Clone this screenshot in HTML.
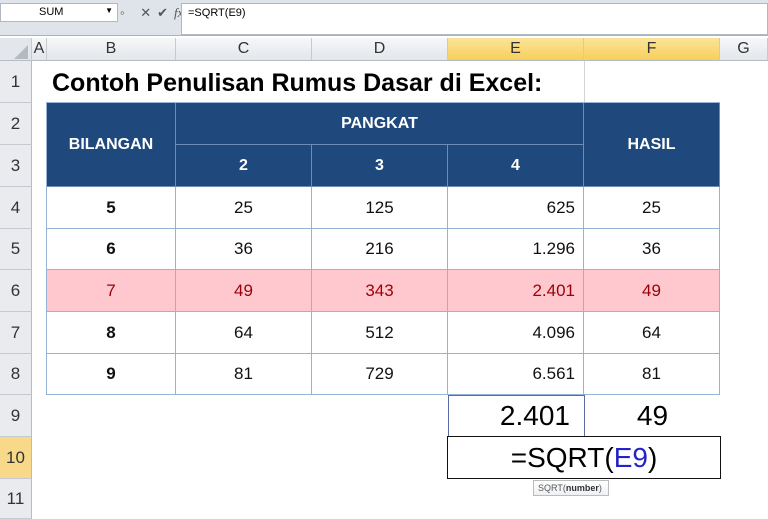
<!DOCTYPE html>
<html><head><meta charset="utf-8"><style>
*{margin:0;padding:0;box-sizing:border-box}
body{width:768px;height:519px;overflow:hidden;background:#fff;font-family:"Liberation Sans",sans-serif;position:relative}
.a{position:absolute}
.rh{position:absolute;left:0;width:32px;background:#e9ebee;border-bottom:1px solid #c5cad1;border-right:1px solid #b6bcc4;color:#333;font-size:17px;display:flex;align-items:center;justify-content:center}
.ch{position:absolute;top:38px;height:23px;background:linear-gradient(#f6f7f9,#e3e6ea);border-right:1px solid #c5cad1;border-bottom:1px solid #b6bcc4;color:#333;font-size:16px;display:flex;align-items:center;justify-content:center}
.c{position:absolute;display:flex;align-items:center;justify-content:center;font-size:17px;color:#111;border-right:1px solid #95b3d7;border-bottom:1px solid #95b3d7}
.h{background:#1f497d;color:#fff;font-weight:bold;font-size:16px;border-color:#6e8cb4}
.p{background:#ffc7ce;color:#9c0006}
.b{font-weight:bold}
.r{justify-content:flex-end;padding-right:8px}
</style></head><body>
<div class="a" style="left:0;top:0;width:768px;height:36px;background:#dfe4ea;border-bottom:1px solid #aab2bd"></div>
<div class="a" style="left:0;top:3px;width:118px;height:19px;background:#fff;border:1px solid #b0b8c2;font-size:11px;padding:2px 0 0 38px">SUM<span style="position:absolute;right:4px;top:2px;font-size:8px">▼</span></div>
<div class="a" style="left:120px;top:5px;font-size:13px;color:#555;letter-spacing:6px">◦ ✕✔<i style="font-family:'Liberation Serif';letter-spacing:0">fx</i></div>
<div class="a" style="left:181px;top:3px;width:587px;height:32px;background:#fff;border:1px solid #b0b8c2;font-size:11px;padding:3px 0 0 6px">=SQRT(E9)</div>
<div class="ch" style="left:0;width:32px;background:#e3e6ea"><span style="width:0;height:0;border-left:14px solid transparent;border-bottom:14px solid #b4bac2;margin:6px 0 0 10px"></span></div>
<div class="ch" style="left:32px;width:15px">A</div>
<div class="ch" style="left:47px;width:129px">B</div>
<div class="ch" style="left:176px;width:136px">C</div>
<div class="ch" style="left:312px;width:136px">D</div>
<div class="ch" style="left:448px;width:136px;background:linear-gradient(#fbe59a,#f7cf5a)">E</div>
<div class="ch" style="left:584px;width:136px;background:linear-gradient(#fbe59a,#f7cf5a)">F</div>
<div class="ch" style="left:720px;width:48px">G</div>
<div class="rh" style="top:61px;height:42px">1</div>
<div class="rh" style="top:103px;height:42px">2</div>
<div class="rh" style="top:145px;height:42px">3</div>
<div class="rh" style="top:187px;height:42px">4</div>
<div class="rh" style="top:229px;height:41px">5</div>
<div class="rh" style="top:270px;height:42px">6</div>
<div class="rh" style="top:312px;height:42px">7</div>
<div class="rh" style="top:354px;height:41px">8</div>
<div class="rh" style="top:395px;height:42px">9</div>
<div class="rh" style="top:437px;height:42px;background:#f8d98a">10</div>
<div class="rh" style="top:479px;height:40px">11</div>
<div class="a" style="left:584px;top:61px;width:1px;height:42px;background:#d4d4d4"></div>
<div class="a" style="left:52px;top:69px;font-size:25px;font-weight:bold;color:#000">Contoh Penulisan Rumus Dasar di Excel:</div>
<div class="a" style="left:46px;top:103px;width:1px;height:292px;background:#95b3d7"></div>
<div class="a" style="left:46px;top:102px;width:674px;height:1px;background:#95b3d7"></div>
<div class="c h" style="left:47px;top:103px;width:129px;height:84px">BILANGAN</div>
<div class="c h" style="left:176px;top:103px;width:408px;height:42px">PANGKAT</div>
<div class="c h" style="left:176px;top:145px;width:136px;height:42px">2</div>
<div class="c h" style="left:312px;top:145px;width:136px;height:42px">3</div>
<div class="c h" style="left:448px;top:145px;width:136px;height:42px">4</div>
<div class="c h" style="left:584px;top:103px;width:136px;height:84px">HASIL</div>
<div class="c b" style="left:47px;top:187px;width:129px;height:42px">5</div>
<div class="c" style="left:176px;top:187px;width:136px;height:42px">25</div>
<div class="c" style="left:312px;top:187px;width:136px;height:42px">125</div>
<div class="c r" style="left:448px;top:187px;width:136px;height:42px">625</div>
<div class="c" style="left:584px;top:187px;width:136px;height:42px">25</div>
<div class="c b" style="left:47px;top:229px;width:129px;height:41px">6</div>
<div class="c" style="left:176px;top:229px;width:136px;height:41px">36</div>
<div class="c" style="left:312px;top:229px;width:136px;height:41px">216</div>
<div class="c r" style="left:448px;top:229px;width:136px;height:41px">1.296</div>
<div class="c" style="left:584px;top:229px;width:136px;height:41px">36</div>
<div class="c p" style="left:47px;top:270px;width:129px;height:42px">7</div>
<div class="c p" style="left:176px;top:270px;width:136px;height:42px">49</div>
<div class="c p" style="left:312px;top:270px;width:136px;height:42px">343</div>
<div class="c p r" style="left:448px;top:270px;width:136px;height:42px">2.401</div>
<div class="c p" style="left:584px;top:270px;width:136px;height:42px">49</div>
<div class="c b" style="left:47px;top:312px;width:129px;height:42px">8</div>
<div class="c" style="left:176px;top:312px;width:136px;height:42px">64</div>
<div class="c" style="left:312px;top:312px;width:136px;height:42px">512</div>
<div class="c r" style="left:448px;top:312px;width:136px;height:42px">4.096</div>
<div class="c" style="left:584px;top:312px;width:136px;height:42px">64</div>
<div class="c b" style="left:47px;top:354px;width:129px;height:41px">9</div>
<div class="c" style="left:176px;top:354px;width:136px;height:41px">81</div>
<div class="c" style="left:312px;top:354px;width:136px;height:41px">729</div>
<div class="c r" style="left:448px;top:354px;width:136px;height:41px">6.561</div>
<div class="c" style="left:584px;top:354px;width:136px;height:41px">81</div>
<div class="a" style="left:448px;top:395px;width:137px;height:42px;border:1px solid #5a6aa8;border-bottom-color:#a8a870;font-size:28px;display:flex;align-items:center;justify-content:flex-end;padding-right:14px">2.401</div>
<div class="a" style="left:585px;top:395px;width:135px;height:42px;font-size:28px;display:flex;align-items:center;justify-content:center">49</div>
<div class="a" style="left:447px;top:436px;width:274px;height:43px;border:1.5px solid #111;font-size:28px;display:flex;align-items:center;justify-content:center">=SQRT(<span style="color:#2323c8">E9</span>)</div>
<div class="a" style="left:533px;top:480px;width:76px;height:16px;border:1px solid #bbb;background:linear-gradient(#fff,#eef0f3);font-size:9px;color:#555;padding:2px 0 0 4px">SQRT(<b style="color:#333">number</b>)</div>
</body></html>
